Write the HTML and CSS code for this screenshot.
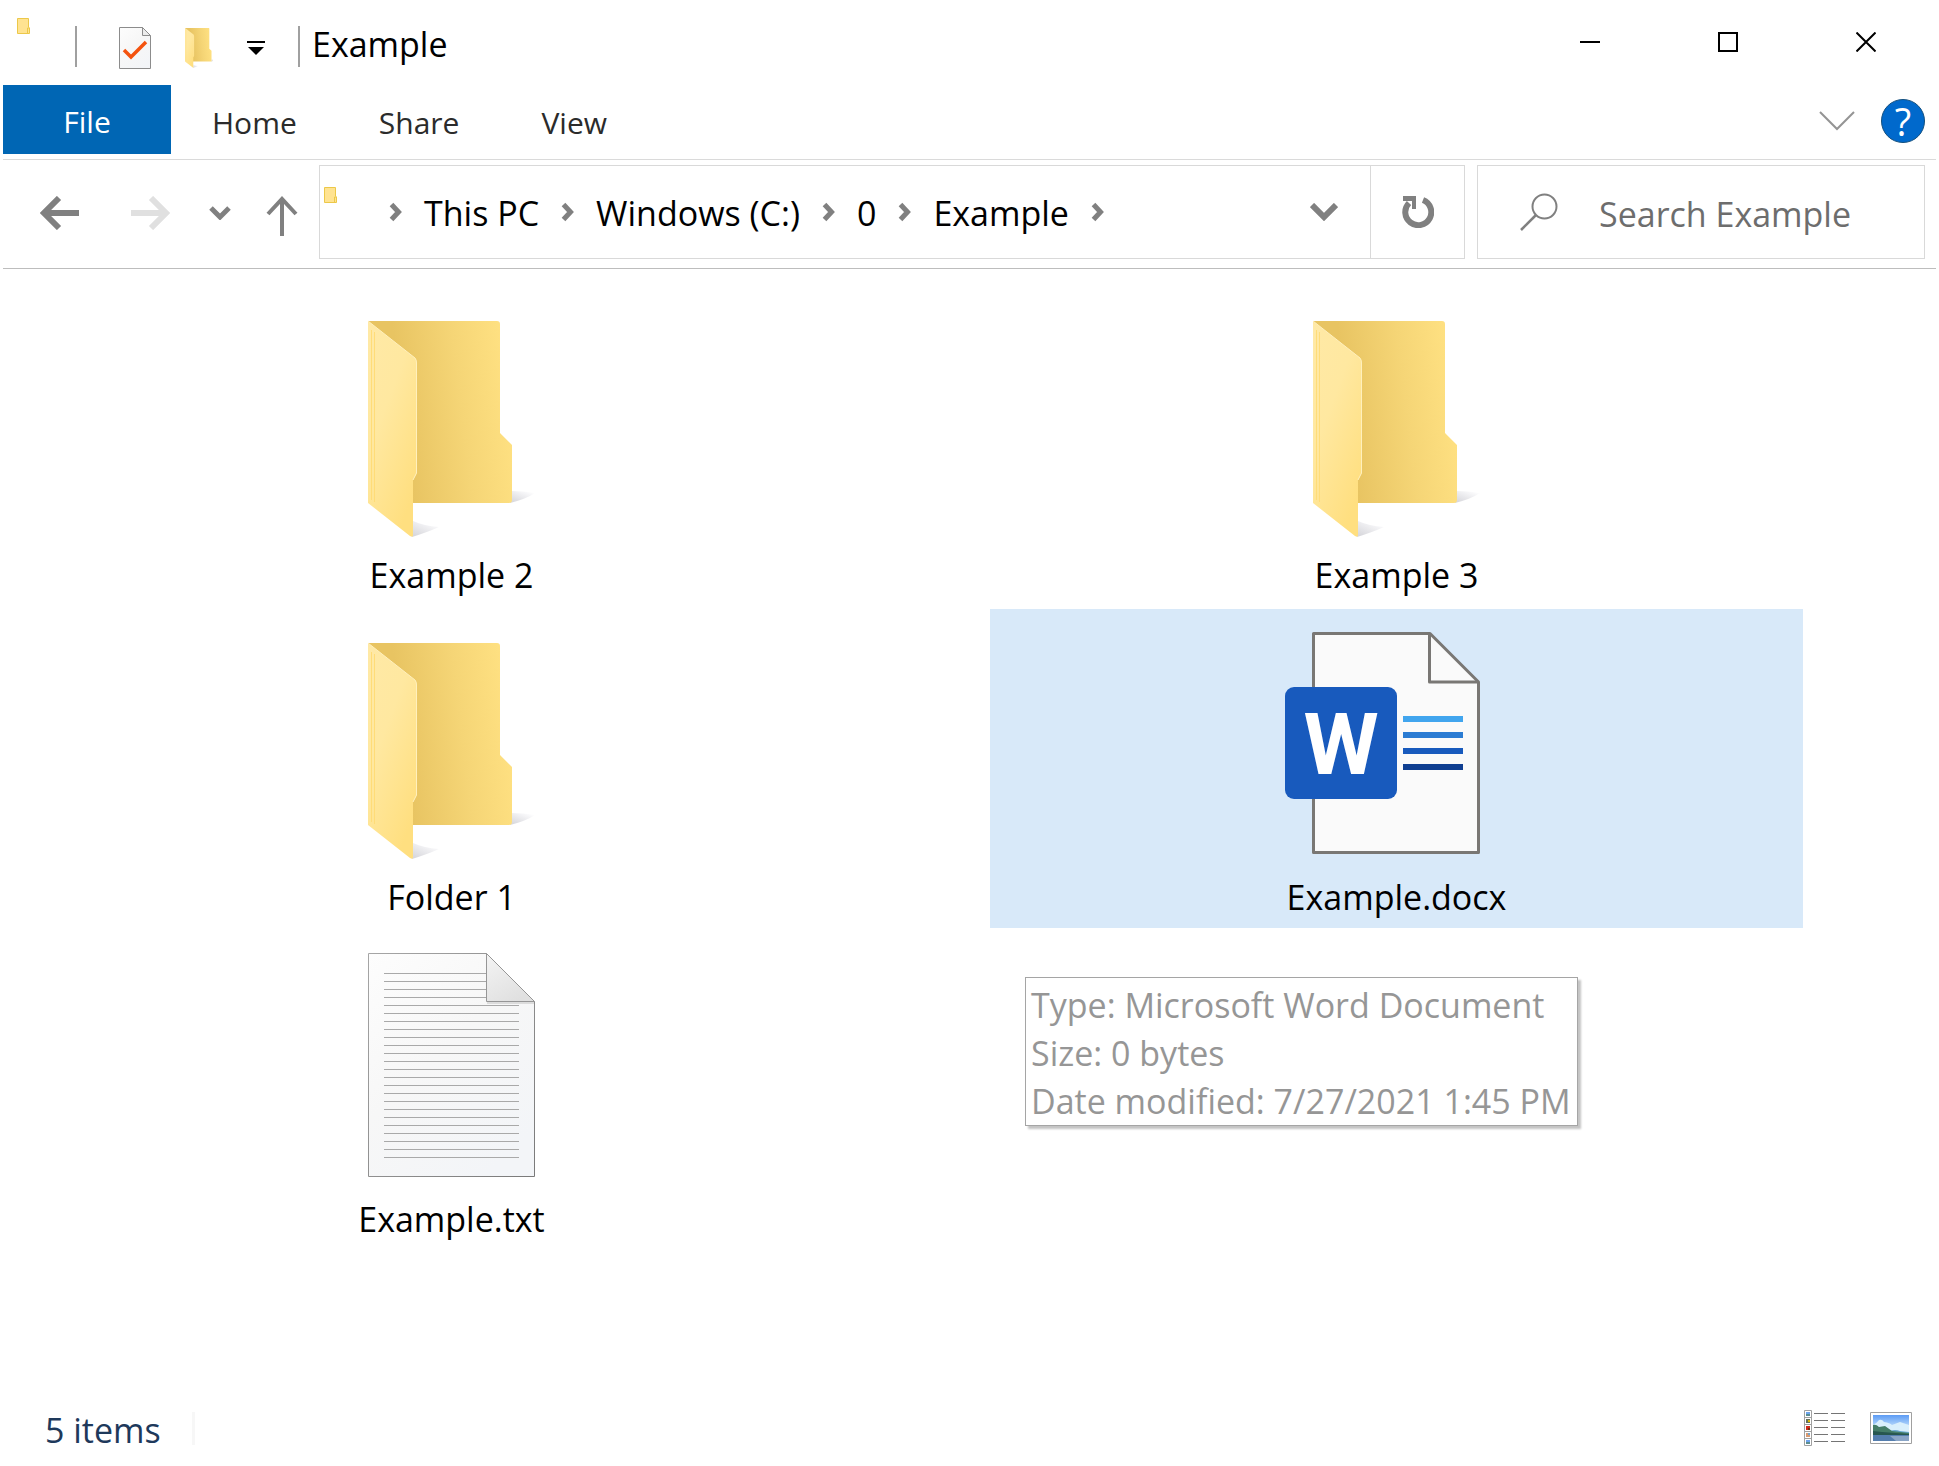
FILE: index.html
```html
<!DOCTYPE html>
<html lang="en">
<head>
<meta charset="utf-8">
<title>Example</title>
<link rel="stylesheet" href="styles.css">
</head>
<body>
<svg class="defs" width="0" height="0" aria-hidden="true">
  <defs>
    <linearGradient id="back" x1="0" y1="0.6" x2="1" y2="0.45">
      <stop offset="0.25" stop-color="#e8c462"/><stop offset="0.65" stop-color="#f5d576"/><stop offset="1" stop-color="#ffe182"/>
    </linearGradient>
    <linearGradient id="flap" x1="0" y1="0" x2="0.6" y2="1">
      <stop offset="0" stop-color="#ffe9a6"/><stop offset="0.45" stop-color="#ffe8a0"/><stop offset="1" stop-color="#ffdf80"/>
    </linearGradient>
    <linearGradient id="shade" x1="0" y1="1" x2="0.8" y2="0">
      <stop offset="0" stop-color="#d3d3d8"/><stop offset="0.8" stop-color="#f6f6f8"/><stop offset="1" stop-color="#ffffff"/>
    </linearGradient>
    <linearGradient id="paper" x1="0" y1="0" x2="0.7" y2="1">
      <stop offset="0" stop-color="#fdfdfd"/><stop offset="0.5" stop-color="#f7f7f7"/><stop offset="1" stop-color="#f3f5f8"/>
    </linearGradient>
    <linearGradient id="fold" x1="0" y1="0" x2="0.6" y2="1">
      <stop offset="0" stop-color="#f4f4f4"/><stop offset="1" stop-color="#e0e0e0"/>
    </linearGradient>
    <linearGradient id="edge" x1="0" y1="0" x2="1" y2="1">
      <stop offset="0" stop-color="#a6a6a6"/><stop offset="1" stop-color="#7a7a7a"/>
    </linearGradient>
    <linearGradient id="sky" x1="0" y1="0" x2="0" y2="1">
      <stop offset="0" stop-color="#5c9bf5"/><stop offset="0.5" stop-color="#c4e2fb"/><stop offset="1" stop-color="#cfe9fb"/>
    </linearGradient>
    <symbol id="folder" viewBox="0 0 224 232">
      <path d="M170 194L172 182Q184 182 195 184Q186 190 170 194Z" fill="url(#shade)"/>
      <path d="M72 228L73 212Q84 217 99 218Q88 223 72 228Z" fill="url(#shade)"/>
      <path d="M28 12H157Q160 12 160 15V124L172 136V191Q172 194 169 194H60Z" fill="url(#back)"/>
      <path d="M28 12L75 49Q77 51 77 54V164L73 171V226Q73 229 70 227L28 194Z" fill="url(#flap)"/>
      <path d="M31.5 21V191M34.5 23V193" stroke="#ffdc78" stroke-width="1" fill="none"/>
      <path d="M28 12L75 49Q76.500 51 76.500 54V164L73 171" stroke="#fff0bd" stroke-width="1" fill="none"/>
    </symbol>
    <symbol id="folder-small" viewBox="0 0 13 16">
      <path d="M.5.5H11.500V9L12.500 10V15.500H.5Z" fill="#ffe391" stroke="#ecc849"/>
      <path d="M10.500 15V10H12" fill="none" stroke="#ecc849"/>
    </symbol>
    <symbol id="crumb" viewBox="0 0 13 20">
      <path d="M2.500 2.500L9.500 10L2.500 17.500" fill="none" stroke="#808080" stroke-width="5"/>
    </symbol>
  </defs>
</svg>

<div class="window">
  <header class="titlebar">
    <svg class="app-icon" width="13" height="16"><use href="#folder-small"/></svg>
    <span class="bar"></span>
    <div class="quick">
      <button class="plain" aria-label="Properties">
        <svg width="32" height="42" viewBox="0 0 32 42"><path d="M.5.500H23.500L31.500 9V41.500H.500Z" fill="url(#paper)" stroke="#8c8c8c"/><path d="M23.500.500V8.500H31.500Z" fill="#ececec" stroke="#8c8c8c"/><path d="M5 23L12 30L27 15" fill="none" stroke="#f4530f" stroke-width="3.500"/></svg>
      </button>
      <button class="plain" aria-label="New folder">
        <svg width="28" height="40" viewBox="28 12 152 217" preserveAspectRatio="xMinYMin"><use href="#folder" width="224" height="232"/></svg>
      </button>
      <button class="plain" aria-label="Customize toolbar">
        <svg width="18" height="14" viewBox="0 0 18 14"><path d="M0 0H18V2H0ZM1 6H17L9 14Z"/></svg>
      </button>
    </div>
    <span class="bar"></span>
    <h1 class="title">Example</h1>
    <div class="controls">
      <button aria-label="Minimize"><svg width="20" height="20"><path d="M0 10H20" stroke="#000" stroke-width="2"/></svg></button>
      <button aria-label="Maximize"><svg width="20" height="20"><path d="M1 1H19V19H1Z" fill="none" stroke="#000" stroke-width="2"/></svg></button>
      <button aria-label="Close"><svg width="20" height="20"><path d="M.5.500L19.500 19.500M19.500.500L.5 19.500" stroke="#000" stroke-width="2"/></svg></button>
    </div>
  </header>

  <nav class="ribbon">
    <button class="file">File</button>
    <button class="tab">Home</button>
    <button class="tab">Share</button>
    <button class="tab">View</button>
    <div class="ribbon-end">
      <button class="plain" aria-label="Expand ribbon"><svg width="36" height="20" viewBox="0 0 36 20"><path d="M1 1L18 18L35 1" fill="none" stroke="#949494" stroke-width="2"/></svg></button>
      <button class="help" aria-label="Help">?</button>
    </div>
  </nav>

  <div class="navbar">
    <div class="history">
      <button class="step" aria-label="Back"><svg width="39" height="34" viewBox="0 0 39 34"><path d="M19 2L4 17L19 32M4 17H39" fill="none" stroke="#808080" stroke-width="6"/></svg></button>
      <button class="step" aria-label="Forward" disabled><svg width="39" height="34" viewBox="0 0 39 34"><path d="M20 2L35 17L20 32M35 17H0" fill="none" stroke="#e0e0e0" stroke-width="6"/></svg></button>
      <button class="recent" aria-label="Recent locations"><svg width="22" height="14" viewBox="0 0 22 14"><path d="M2 2L11 11L20 2" fill="none" stroke="#808080" stroke-width="5"/></svg></button>
      <button class="up" aria-label="Up"><svg width="32" height="40" viewBox="0 0 32 40"><path d="M2 18L16 3L30 18M16 3V40" fill="none" stroke="#808080" stroke-width="4"/></svg></button>
    </div>
    <div class="address">
      <svg class="place" width="13" height="16"><use href="#folder-small"/></svg>
      <div class="crumbs">
        <svg width="13" height="20"><use href="#crumb"/></svg>
        <a href="#">This PC</a>
        <svg width="13" height="20"><use href="#crumb"/></svg>
        <a href="#">Windows (C:)</a>
        <svg width="13" height="20"><use href="#crumb"/></svg>
        <a href="#">0</a>
        <svg width="13" height="20"><use href="#crumb"/></svg>
        <a href="#">Example</a>
        <svg width="13" height="20"><use href="#crumb"/></svg>
      </div>
      <button class="previous" aria-label="Previous locations"><svg width="28" height="18" viewBox="0 0 28 18"><path d="M2 2L14 14L26 2" fill="none" stroke="#808080" stroke-width="6"/></svg></button>
      <button class="refresh" aria-label="Refresh"><svg width="32" height="32" viewBox="0 0 32 32"><path d="M21 4A13 13 0 1 1 7 7" fill="none" stroke="#808080" stroke-width="6"/><path d="M1 0H14V13H10V5H1Z" fill="#808080"/></svg></button>
    </div>
    <label class="search">
      <svg width="38" height="38" viewBox="0 0 38 38"><circle cx="24.500" cy="13.500" r="12" fill="none" stroke="#808080" stroke-width="2"/><path d="M16 22L1 37" stroke="#808080" stroke-width="2.500"/></svg>
      <input type="search" placeholder="Search Example" aria-label="Search Example">
    </label>
  </div>

  <main class="files">
    <div class="item">
      <svg width="224" height="232"><use href="#folder"/></svg>
      <span class="name">Example 2</span>
    </div>
    <div class="item">
      <svg width="224" height="232"><use href="#folder"/></svg>
      <span class="name">Example 3</span>
    </div>
    <div class="item">
      <svg width="224" height="232"><use href="#folder"/></svg>
      <span class="name">Folder 1</span>
    </div>
    <div class="item selected">
      <svg width="224" height="232" viewBox="0 0 224 232">
        <path d="M28.500 2.500H145L193.500 51V221.500H28.500Z" fill="#fafafa" stroke="#797774" stroke-width="3" stroke-linejoin="round"/>
        <path d="M144.500 2.500V51H193.500" fill="none" stroke="#797774" stroke-width="3" stroke-linejoin="round"/>
        <rect y="56" width="112" height="112" rx="9" fill="#185abd"/>
        <text class="word" x="56" y="143" text-anchor="middle">W</text>
        <path d="M118 88H178" stroke="#41a5ee" stroke-width="6"/>
        <path d="M118 104H178" stroke="#2b7cd3" stroke-width="6"/>
        <path d="M118 120H178" stroke="#185abd" stroke-width="6"/>
        <path d="M118 136H178" stroke="#103f91" stroke-width="6"/>
      </svg>
      <span class="name">Example.docx</span>
      <div class="tooltip" role="tooltip">
        <div>Type: Microsoft Word Document</div>
        <div>Size: 0 bytes</div>
        <div>Date modified: 7/27/2021 1:45 PM</div>
      </div>
    </div>
    <div class="item">
      <svg width="224" height="232" viewBox="0 0 224 232">
        <path d="M28.500.5H146.500L194.500 48.500V223.500H28.500Z" fill="url(#paper)" stroke="url(#edge)"/>
        <path d="M44 20.500H146M44 28.500H146M44 36.500H146M44 44.500H146M44 52.500H179M44 60.500H179M44 68.500H179M44 76.500H179M44 84.500H179M44 92.500H179M44 100.500H179M44 108.500H179M44 116.500H179M44 124.500H179M44 132.500H179M44 140.500H179M44 148.500H179M44 156.500H179M44 164.500H179M44 172.500H179M44 180.500H179M44 188.500H179M44 196.500H179M44 204.500H179" stroke="#a9a9a9"/>
        <path d="M147 50H194" stroke="#dcdcdc" stroke-width="2"/>
        <path d="M146.500.5V48.500H194.500Z" fill="url(#fold)" stroke="#969696"/>
      </svg>
      <span class="name">Example.txt</span>
    </div>
  </main>

  <footer class="status">
    <span class="count">5 items</span>
    <span class="divider"></span>
    <div class="views">
      <button class="plain" aria-label="Details view">
        <svg width="41" height="36" viewBox="0 0 41 36">
          <path d="M.5.500H7.500V35.500H.5ZM0 7.500H8M0 14.500H8M0 21.500H8M0 28.500H8" fill="#fff" stroke="#a0a0a0"/>
          <path d="M2 2H6V4H2ZM2 30H6V32H2Z" fill="#6da4ee"/><path d="M2 4H6V6H2ZM2 32H6V34H2Z" fill="#5a8d92"/>
          <path d="M2 9H6V13H2Z" fill="#64705a"/><path d="M4 10H6V12H4Z" fill="#d9b800"/>
          <path d="M2 16H6V20H2Z" fill="#d22b1c"/><path d="M4 18H6V20H4Z" fill="#6b3214"/>
          <path d="M2 23H6V27H2Z" fill="#d99a70"/><path d="M4 23H6V25H4Z" fill="#74a5cf"/>
          <path d="M10 3.500H24M27 3.500H41M10 10.500H24M27 10.500H41M10 17.500H24M27 17.500H41M10 24.500H24M27 24.500H41M10 31.500H24M27 31.500H41" stroke="#757575"/>
        </svg>
      </button>
      <button class="plain" aria-label="Large thumbnails view">
        <svg width="42" height="32" viewBox="0 0 42 32">
          <path d="M.5.500H41.500V31.500H.5Z" fill="#fff" stroke="#a0a0a0"/>
          <path d="M3 3H39V29H3Z" fill="url(#sky)"/>
          <path d="M3 13Q7 11 9 8Q12 7 14 10Q20 11 22 13L30 10L39 13V22H3Z" fill="#d9effc"/>
          <path d="M20 19Q25 17 30 19L39 20V23H20Z" fill="#69a8cf"/>
          <path d="M3 13Q6 12 9 15L15 14L22 19L39 21V24H3Z" fill="#457d68"/>
          <path d="M3 19L12 20L39 22V24H3Z" fill="#285750"/>
          <path d="M3 23H39V29H3Z" fill="#557eae"/>
          <path d="M20 24H39V29H26Z" fill="#8aa5c6"/>
        </svg>
      </button>
    </div>
  </footer>
</div>
</body>
</html>
```
FILE: styles.css
```css
* {
  box-sizing: border-box;
}

body {
  margin: 0;
  background: #fff;
  color: #000;
  font-family: "Open Sans", "Noto Sans", sans-serif;
  font-size: 34px;
  line-height: 46px;
}

button {
  display: flex;
  align-items: center;
  justify-content: center;
  margin: 0;
  padding: 0;
  border: 0;
  background: none;
  color: inherit;
  font: inherit;
}

svg {
  display: block;
  flex: none;
}

.defs {
  position: absolute;
}

.window {
  display: flex;
  flex-direction: column;
  min-height: 100vh;
}

.titlebar {
  display: flex;
  align-items: center;
  height: 85px;
  padding: 8px 4px 0 17px;
}

.app-icon {
  align-self: flex-start;
  margin: 10px 45px 0 0;
}

.bar {
  width: 2px;
  height: 41px;
  background: #a0a0a0;
}

.quick {
  display: flex;
  align-items: center;
  gap: 34px;
  padding: 2px 33px 0 42px;
}

.title {
  margin: 0;
  padding: 0 0 5px 12px;
  font-size: 34px;
  font-weight: 400;
}

.controls {
  display: flex;
  align-self: flex-start;
  margin-left: auto;
}

.controls button {
  width: 138px;
  height: 68px;
}

.ribbon {
  display: flex;
  height: 75px;
  margin: 0 3px;
  padding-bottom: 5px;
  border-bottom: 1px solid #dadada;
  color: #2b2b2b;
  font-size: 30px;
}

.file {
  width: 168px;
  padding-top: 4px;
  background: #0066b4;
  color: #fff;
}

.tab {
  padding: 6px 41px 0;
}

.ribbon-end {
  display: flex;
  align-items: center;
  gap: 26px;
  margin-left: auto;
  padding: 3px 11px 0 0;
}

.help {
  width: 44px;
  height: 44px;
  border: 1px solid #14507f;
  border-radius: 50%;
  background: #0069cc;
  color: #fff;
  font-size: 38px;
}

.navbar {
  display: flex;
  height: 109px;
  margin: 0 3px;
  padding: 5px 11px 9px;
  border-bottom: 1px solid #bdbdbd;
}

.history {
  display: flex;
  padding-top: 2px;
}

.step {
  width: 91px;
}

.recent {
  width: 48px;
}

.up {
  width: 75px;
  padding-top: 5px;
}

.address {
  display: flex;
  flex: 1;
  border: 1px solid #d9d9d9;
}

.place {
  margin: 21px 0 0 4px;
}

.crumbs {
  display: flex;
  flex: 1;
  align-items: center;
  gap: 22px;
  padding-left: 52px;
}

.crumbs a {
  padding-top: 2px;
  color: #000;
  text-decoration: none;
  white-space: nowrap;
}

.previous {
  width: 92px;
}

.refresh {
  width: 94px;
  border-left: 1px solid #d9d9d9;
}

.search {
  display: flex;
  flex: 0 1 448px;
  align-items: center;
  gap: 41px;
  min-width: 0;
  margin-left: 12px;
  padding-left: 42px;
  border: 1px solid #d9d9d9;
}

.search input {
  flex: 1;
  min-width: 0;
  height: 50px;
  margin: 4px 0 0;
  padding: 0;
  border: 0;
  outline: 0;
  background: none;
  font: inherit;
}

.search input::placeholder {
  color: #6d6d6d;
  opacity: 1;
}

.files {
  display: grid;
  flex: 1;
  grid-template-columns: repeat(2, minmax(0, 1fr));
  align-content: start;
  gap: 3px 132px;
  padding: 18px 136px 0 45px;
}

.item {
  position: relative;
  display: flex;
  flex-direction: column;
  align-items: center;
  gap: 11px;
  padding: 22px 0 8px;
}

.selected {
  background: #d8e9f9;
}

.word {
  fill: #fff;
  font-family: Roboto, sans-serif;
  font-size: 86px;
  font-weight: 700;
}

.tooltip {
  position: absolute;
  top: 368px;
  left: 35px;
  padding: 3px 6px 0 5px;
  border: 1px solid #a5a5a5;
  background: #fff;
  box-shadow: 3px 3px 2px #c4c4c4;
  color: #969696;
  line-height: 48px;
  white-space: nowrap;
}

.status {
  display: flex;
  align-items: center;
  height: 76px;
  padding: 0 27px 0 45px;
  color: #1e395b;
}

.count {
  padding-top: 3px;
}

.divider {
  width: 3px;
  height: 33px;
  margin-left: 31px;
  background: #f7f7f7;
}

.views {
  display: flex;
  align-items: center;
  gap: 25px;
  margin-left: auto;
}
```
